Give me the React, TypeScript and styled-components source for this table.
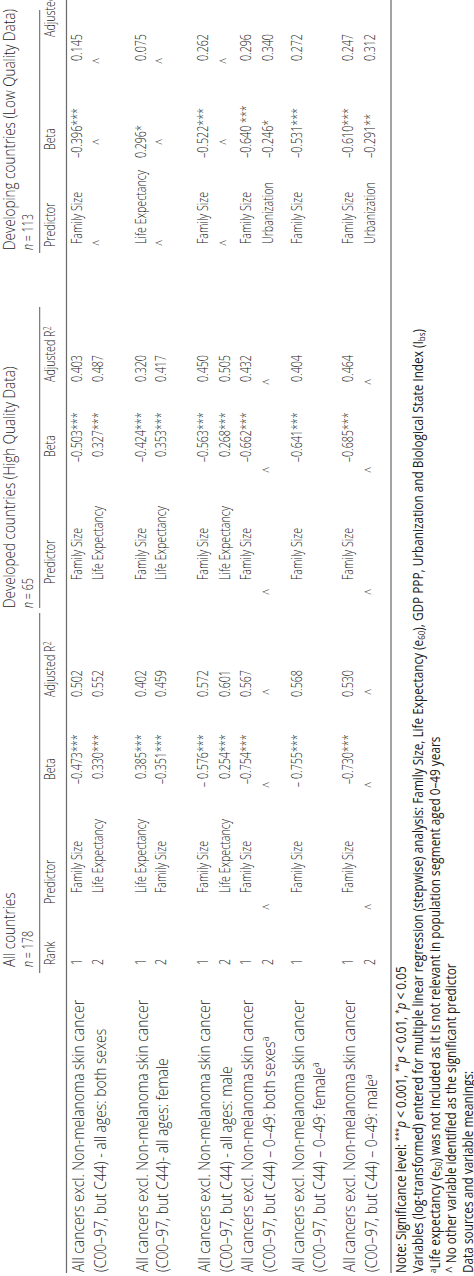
import React from 'react';
import styled, { createGlobalStyle } from 'styled-components';

const PAGE_W = 474;
const PAGE_H = 1276;
// the scan is squeezed along the lines of text, so stretch across them
const STRETCH = 1.22;
// the numeric columns are set in a narrower face than the row labels
const NARROW = 1.12;

const TRACKS = [300, 62, 116, 94, 91, 135, 87, 133, 87, 95, 100].map((w) => `${w}px`).join(' ');

const GlobalStyle = createGlobalStyle`
  html, body {
    margin: 0;
    padding: 0;
    background: #fff;
  }
`;

const Page = styled.div`
  width: ${PAGE_W}px;
  height: ${PAGE_H}px;
  overflow: hidden;
  background: #fff;
`;

// the table is printed sideways: lay it out upright, then turn it
const Sheet = styled.div`
  width: 1300px;
  transform-origin: 0 0;
  transform: translateY(${PAGE_H}px) rotate(-90deg) scale(1, ${STRETCH});
  color: #232323;
  font-family: "Open Sans", "Liberation Sans", sans-serif;
  font-weight: 350;
  sup {
    font-size: 0.68em;
    line-height: 0;
    vertical-align: 0.45em;
  }
  sub {
    font-size: 0.68em;
    line-height: 0;
    vertical-align: -0.2em;
  }
`;

const Grid = styled.div`
  display: grid;
  grid-template-columns: ${TRACKS};
`;

const GroupRow = styled(Grid)`
  margin-top: -2.6px;
`;

const GroupHead = styled.div<{ $span: string; $pad: number; $ruleL: number; $ruleR: number }>`
  grid-column: ${(p) => p.$span};
  margin: 0 ${(p) => p.$ruleR}px 0 ${(p) => p.$ruleL}px;
  padding: 0 0 1px ${(p) => p.$pad}px;
  border-bottom: 1.2px solid #7a7a7a;
  white-space: nowrap;
`;

const GroupTitle = styled.div`
  font-size: 13.5px;
  line-height: 15.6px;
`;

const GroupN = styled.div`
  font-size: 10.7px;
  line-height: 15.6px;
  transform: scaleY(${NARROW});
`;

const HeadRow = styled(Grid)`
  padding-bottom: 3px;
  border-bottom: 1.3px solid #6a6a6a;
  font-size: 10.7px;
  line-height: 17.4px;
`;

const HeadCell = styled.div<{ $at: number }>`
  padding-left: ${(p) => p.$at}px;
  white-space: nowrap;
  transform: scaleY(${NARROW});
`;

const Body = styled.div`
  padding-bottom: 7.5px;
  border-bottom: 1.3px solid #6a6a6a;
`;

const Group = styled(Grid)<{ $gap: number }>`
  grid-auto-rows: 17.4px;
  padding-top: ${(p) => p.$gap}px;
`;

const Label = styled.div`
  grid-row: span 2;
  padding-left: 1px;
  font-size: 13.9px;
  line-height: 17.4px;
  white-space: nowrap;
`;

const Cell = styled.div<{ $at: number }>`
  padding-left: ${(p) => p.$at}px;
  font-size: 10.7px;
  line-height: 17.4px;
  white-space: pre;
  transform: scaleY(${NARROW});
`;

const Sign = styled.span`
  display: inline-block;
  width: 12px;
  margin-left: -12px;
  text-align: right;
  white-space: pre;
`;

const Notes = styled.div`
  padding-top: 1.2px;
  font-size: 11.8px;
  line-height: 13.8px;
  font-weight: 400;
  color: #1a1a1a;
  white-space: nowrap;
`;

type Col = { head: React.ReactNode; headAt: number; at: number; caretAt: number; hang?: boolean };

const R2 = (
  <>
    Adjusted R<sup>2</sup>
  </>
);

const COLS: Col[] = [
  { head: 'Rank', headAt: 8, at: 8, caretAt: 8 },
  { head: 'Predictor', headAt: 7, at: 18, caretAt: 1 },
  { head: 'Beta', headAt: 15, at: 16, caretAt: 7, hang: true },
  { head: R2, headAt: 4, at: 4, caretAt: 6 },
  { head: 'Predictor', headAt: 26, at: 30, caretAt: 15 },
  { head: 'Beta', headAt: 18, at: 18, caretAt: 2, hang: true },
  { head: R2, headAt: 6, at: 6, caretAt: 3 },
  { head: 'Predictor', headAt: 8, at: 11, caretAt: 9 },
  { head: 'Beta', headAt: 18, at: 10, caretAt: 23 },
  { head: R2, headAt: 36, at: 12, caretAt: 9 },
];

type Row = string[];
type GroupData = { gap: number; line2: string; sup?: boolean; rows: Row[] };

const LINE1 = 'All cancers excl. Non-melanoma skin cancer';

const GROUPS: GroupData[] = [
  {
    gap: 0.5,
    line2: '(C00–97, but C44) - all ages: both sexes',
    rows: [
      ['1', 'Family Size', '–0.473***', '0.502', 'Family Size', '–0.503***', '0.403', 'Family Size', '–0.396***', '0.145'],
      ['2', 'Life Expectancy', '0.330***', '0.552', 'Life Expectancy', '0.327***', '0.487', '^', '^', '^'],
    ],
  },
  {
    gap: 16.8,
    line2: '(C00–97, but C44)- all ages: female',
    rows: [
      ['1', 'Life Expectancy', '0.385***', '0.402', 'Family Size', '–0.424***', '0.320', 'Life Expectancy', '0.296*', '0.075'],
      ['2', 'Family Size', '–0.351***', '0.459', 'Life Expectancy', '0.353***', '0.417', '^', '^', '^'],
    ],
  },
  {
    gap: 16.9,
    line2: '(C00–97, but C44) - all ages: male',
    rows: [
      ['1', 'Family Size', '– 0.576***', '0.572', 'Family Size', '–0.563***', '0.450', 'Family Size', '–0.522***', '0.262'],
      ['2', 'Life Expectancy', '0.254***', '0.601', 'Life Expectancy', '0.268***', '0.505', '^', '^', '^'],
    ],
  },
  {
    gap: 0,
    line2: '(C00–97, but C44) – 0–49: both sexes',
    sup: true,
    rows: [
      ['1', 'Family Size', '–0.754***', '0.567', 'Family Size', '–0.662***', '0.432', 'Family Size', '–0.640 ***', '0.296'],
      ['2', '^', '^', '^', '^', '^', '^', 'Urbanization', '–0.246*', '0.340'],
    ],
  },
  {
    gap: 7,
    line2: '(C00–97, but C44) – 0–49: female',
    sup: true,
    rows: [['1', 'Family Size', '– 0.755***', '0.568', 'Family Size', '–0.641***', '0.404', 'Family Size', '–0.531***', '0.272']],
  },
  {
    gap: 7.8,
    line2: '(C00–97, but C44) – 0–49: male',
    sup: true,
    rows: [
      ['1', 'Family Size', '–0.730***', '0.530', 'Family Size', '–0.685***', '0.464', 'Family Size', '–0.610***', '0.247'],
      ['2', '^', '^', '^', '^', '^', '^', 'Urbanization', '–0.291**', '0.312'],
    ],
  },
];

function Value({ v, col }: { v: string; col: Col }) {
  if (v === '^') return <Cell $at={col.caretAt}>^</Cell>;
  const m = v.match(/^([–−]\s?)(.*)$/);
  if (col.hang && m) {
    return (
      <Cell $at={col.at}>
        <Sign>{m[1]}</Sign>
        {m[2]}
      </Cell>
    );
  }
  return <Cell $at={col.at}>{v}</Cell>;
}

function Heading() {
  return (
    <>
      <GroupRow>
        <div />
        <GroupHead $span="2 / 6" $pad={6} $ruleL={0} $ruleR={3}>
          <GroupTitle>All countries</GroupTitle>
          <GroupN>
            <i>n</i> = 178
          </GroupN>
        </GroupHead>
        <GroupHead $span="6 / 9" $pad={0} $ruleL={2} $ruleR={52}>
          <GroupTitle>Developed countries (High Quality Data)</GroupTitle>
          <GroupN>
            <i>n</i> = 65
          </GroupN>
        </GroupHead>
        <GroupHead $span="9 / 12" $pad={3} $ruleL={2} $ruleR={37}>
          <GroupTitle>Developing countries (Low Quality Data)</GroupTitle>
          <GroupN>
            <i>n</i> = 113
          </GroupN>
        </GroupHead>
      </GroupRow>
      <HeadRow>
        <div />
        {COLS.map((c, i) => (
          <HeadCell key={i} $at={c.headAt}>
            {c.head}
          </HeadCell>
        ))}
      </HeadRow>
    </>
  );
}

export default function App() {
  return (
    <>
      <GlobalStyle />
      <Page>
        <Sheet>
          <Heading />
          <Body>
            {GROUPS.map((g, gi) => (
              <Group key={gi} $gap={g.gap}>
                <Label>
                  {LINE1}
                  <br />
                  {g.line2}
                  {g.sup && <sup>a</sup>}
                </Label>
                {g.rows.map((r) => r.map((v, ci) => <Value key={`${r[0]}-${ci}`} v={v} col={COLS[ci]} />))}
              </Group>
            ))}
          </Body>
          <Notes>
            <div>
              Note: Significance level: <sup>***</sup>
              <i>p</i> &lt; 0.001, <sup>**</sup>
              <i>p</i> &lt; 0.01, <sup>*</sup>
              <i>p</i> &lt; 0.05
            </div>
            <div>
              Variables (log-transformed) entered for multiple linear regression (stepwise) analysis: Family Size, Life
              Expectancy (e<sub>60</sub>), GDP PPP, Urbanization and Biological State Index (I<sub>bs</sub>)
            </div>
            <div>
              <sup>a</sup>Life expectancy (e<sub>50</sub>) was not included as it is not relevant in population segment
              aged 0–49 years
            </div>
            <div>^ No other variable identified as the significant predictor</div>
            <div>Data sources and variable meanings:</div>
          </Notes>
        </Sheet>
      </Page>
    </>
  );
}
